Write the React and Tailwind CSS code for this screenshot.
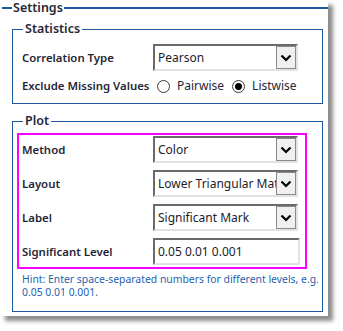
import React from 'react';

const font = { fontFamily: '"Noto Sans", "Open Sans", sans-serif' };

const Chevron = () => (
  <svg width="12" height="8" viewBox="0 0 12 8" fill="none">
    <path d="M1.5 1.5 L6 6 L10.5 1.5" stroke="#000" strokeWidth="2.2" />
  </svg>
);

const Select = ({ value }) => (
  <div className="flex items-center h-[27px] w-[145px] bg-white border-2 border-t-[#6a6a6a] border-l-[#6a6a6a] border-b-[#e2e2e2] border-r-[#e2e2e2]">
    <span className="flex-1 pl-[3px] overflow-hidden whitespace-nowrap text-[12px] text-[#1c1c2c]">{value}</span>
    <span className="flex items-center justify-center w-[20px] h-[23px] bg-[#f0f0f0] border border-[#8a8a8a]">
      <Chevron />
    </span>
  </div>
);

const Radio = ({ checked, label }) => (
  <label className="flex items-center gap-[7px]">
    <span className="flex items-center justify-center w-[13px] h-[13px] rounded-full border border-[#3a3a3a] bg-white">
      {checked && <span className="w-[7px] h-[7px] rounded-full bg-black" />}
    </span>
    <span className="text-[12px] text-[#262637] whitespace-nowrap">{label}</span>
  </label>
);

const Label = ({ children }) => (
  <span className="w-[131px] shrink-0 whitespace-nowrap text-[11.4px] font-semibold text-[#262637]">{children}</span>
);

export default function App() {
  return (
    <div className="w-[343px] h-[331px] bg-white" style={font}>
      <div className="w-[328px] h-[316px] bg-white shadow-[5px_5px_4px_rgba(0,0,0,0.45)]">
        <fieldset className="ml-[2px] mr-0 border-0 border-t-2 border-[#1a5a9c] pl-[10px] pr-[5px]">
          <legend className="px-px text-[12.5px] leading-[16px] font-semibold text-[#262637]">Settings</legend>

          <fieldset className="mt-[5px] border border-[#1a5a9c] pl-[9px] pr-[20px] pt-[7px] pb-[8px]">
            <legend className="ml-[1px] px-[2px] text-[12.5px] leading-[16px] font-semibold text-[#262637]">Statistics</legend>
            <div className="flex items-center">
              <Label>Correlation Type</Label>
              <Select value="Pearson" />
            </div>
            <div className="flex items-center mt-[6px] h-[18px]">
              <Label>Exclude Missing Values</Label>
              <div className="flex items-center gap-[8px] ml-[4px]">
                <Radio label="Pairwise" />
                <Radio checked label="Listwise" />
              </div>
            </div>
          </fieldset>

          <fieldset className="mt-[9px] border border-[#1a5a9c] pl-[4px] pr-[3px] pt-[4px] pb-[12px]">
            <legend className="ml-[6px] px-[2px] text-[12.5px] leading-[16px] font-semibold text-[#262637]">Plot</legend>
            <div className="mr-[12px] border-2 border-[#ff00ff] pl-[3px] pt-px pb-[2px] flex flex-col gap-[7px]">
              <div className="flex items-center">
                <Label>Method</Label>
                <Select value="Color" />
              </div>
              <div className="flex items-center">
                <Label>Layout</Label>
                <Select value="Lower Triangular Matrix" />
              </div>
              <div className="flex items-center">
                <Label>Label</Label>
                <Select value="Significant Mark" />
              </div>
              <div className="flex items-center">
                <Label>Significant Level</Label>
                <div className="flex items-center h-[27px] w-[147px] bg-white border-2 border-t-[#6a6a6a] border-l-[#6a6a6a] border-b-[#e2e2e2] border-r-[#e2e2e2] pl-[3px] text-[12px] text-[#1c1c2c]">
                  0.05 0.01 0.001
                </div>
              </div>
            </div>
            <p className="mt-[4px] pl-[5px] text-[10.4px] leading-[13px] text-[#1f5fae]">
              Hint: Enter space-separated numbers for different levels, e.g. 0.05 0.01 0.001.
            </p>
          </fieldset>
        </fieldset>
      </div>
    </div>
  );
}
